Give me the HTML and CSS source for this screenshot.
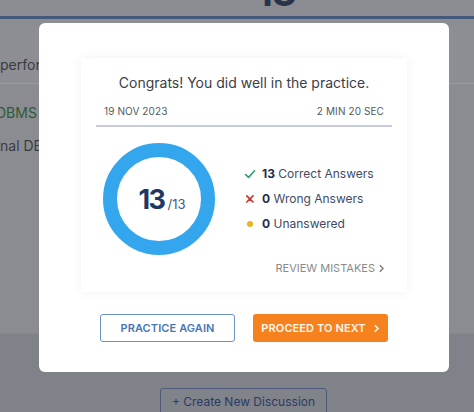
FILE: index.html
```html
<!DOCTYPE html>
<html lang="en">
<head>
<meta charset="utf-8">
<title>Practice result</title>
<link rel="stylesheet" href="styles.css">
</head>
<body>
<div class="page">
  <div class="top-num"><span>13</span></div>
  <div class="blue-line"></div>
  <div class="perf-row"><span>performance</span></div>
  <div class="topic">
    <div class="topic-green">DBMS</div>
    <div class="topic-sub">nal DBMS</div>
  </div>
  <div class="lower">
    <div class="discussion-btn">+ Create New Discussion</div>
  </div>
</div>

<div class="modal">
  <div class="card">
    <div class="card-title">Congrats! You did well in the practice.</div>
    <div class="meta">
      <span>19 NOV 2023</span>
      <span>2 MIN 20 SEC</span>
    </div>
    <div class="divider"></div>
    <div class="result">
      <div class="donut">
        <span class="score">13</span><span class="total">/13</span>
      </div>
      <div class="stats">
        <div class="stat">
          <svg class="ico" viewBox="0 0 12 12" width="12" height="12"><path d="M1.5 6.5 L4.6 9.4 L10.6 2.8" fill="none" stroke="#2e9f6b" stroke-width="1.6" stroke-linecap="round" stroke-linejoin="round"/></svg>
          <b>13</b>&nbsp;Correct Answers
        </div>
        <div class="stat">
          <svg class="ico" viewBox="0 0 12 12" width="12" height="12"><path d="M2.8 2.8 L9 9 M9 2.8 L2.8 9" fill="none" stroke="#c8372d" stroke-width="1.7" stroke-linecap="round"/></svg>
          <b>0</b>&nbsp;Wrong Answers
        </div>
        <div class="stat">
          <svg class="ico" viewBox="0 0 12 12" width="12" height="12"><circle cx="6" cy="6" r="3" fill="#e8b420"/></svg>
          <b>0</b>&nbsp;Unanswered
        </div>
      </div>
    </div>
    <div class="review">REVIEW MISTAKES
      <svg viewBox="0 0 8 10" width="7" height="9"><path d="M2 1.2 L5.8 5 L2 8.8" fill="none" stroke="#7e7e7e" stroke-width="1.6"/></svg>
    </div>
  </div>
  <div class="actions">
    <div class="btn btn-outline">PRACTICE AGAIN</div>
    <div class="btn btn-primary">PROCEED TO NEXT
      <svg viewBox="0 0 8 10" width="7" height="9"><path d="M2 1.2 L5.8 5 L2 8.8" fill="none" stroke="#ffffff" stroke-width="1.7"/></svg>
    </div>
  </div>
</div>
</body>
</html>
```

FILE: styles.css
```css
* { box-sizing: border-box; }

html, body {
  margin: 0;
  padding: 0;
}

body {
  width: 474px;
  height: 412px;
  overflow: hidden;
  position: relative;
  background: #8a8c91;
  font-family: Inter, "Noto Sans", sans-serif;
}

.page {
  display: flex;
  flex-direction: column;
  height: 412px;
}

.page > div {
  flex-shrink: 0;
}

.top-num {
  height: 16px;
  overflow: hidden;
  display: flex;
  justify-content: center;
  padding-left: 78px;
}

.top-num span {
  font-size: 38px;
  line-height: 38px;
  font-weight: 700;
  letter-spacing: -1px;
  color: #29334a;
  margin-top: -27px;
}

.blue-line {
  height: 3px;
  background: #42597b;
}

.perf-row {
  height: 65px;
  border-bottom: 1px solid #9a9ca1;
  display: flex;
  align-items: flex-end;
  padding-bottom: 10px;
  font-size: 14px;
  color: #383b42;
  background: #8c8e93;
}

.topic {
  height: 249px;
  padding-top: 20px;
  font-size: 14px;
}

.topic-green {
  color: #2f5b35;
  line-height: 18px;
  margin-left: -4px;
}

.topic-sub {
  color: #3a3c43;
  line-height: 18px;
  margin-top: 15px;
}

.page > .lower {
  flex: 1 1 auto;
  min-height: 0;
  overflow: hidden;
  background: #7f8288;
  border-top: 1px solid #85888d;
  display: flex;
  justify-content: center;
  align-items: flex-start;
  padding-top: 54px;
  padding-left: 13px;
}

.discussion-btn {
  width: 167px;
  height: 30px;
  flex-shrink: 0;
  border: 1px solid #4f5a7a;
  border-radius: 3px;
  color: #2e3a66;
  font-size: 12px;
  display: flex;
  justify-content: center;
  padding-top: 5px;
  background: #80838a;
}

/* modal */
.modal {
  position: absolute;
  left: 39px;
  top: 23px;
  width: 410px;
  height: 349px;
  background: #ffffff;
  border-radius: 6px;
  padding: 35px 42px 0;
  display: flex;
  flex-direction: column;
  gap: 22px;
}

.card {
  height: 234px;
  background: #ffffff;
  box-shadow: 0 0 10px rgba(40, 50, 120, 0.07);
  padding-top: 16px;
  display: flex;
  flex-direction: column;
}

.card-title {
  text-align: center;
  font-size: 14px;
  line-height: 18px;
  color: #3a3e48;
}

.meta {
  display: flex;
  justify-content: space-between;
  padding: 0 23px;
  margin-top: 13px;
  font-size: 10px;
  line-height: 12px;
  color: #555960;
  letter-spacing: 0.1px;
}

.divider {
  height: 2px;
  background: #c7cbe2;
  margin: 8px 15px 0;
}

.result {
  display: flex;
  margin-top: 16px;
  padding-left: 22px;
  gap: 29px;
}

.donut {
  width: 112px;
  height: 112px;
  border-radius: 50%;
  border: 14px solid #33a6ee;
  display: flex;
  align-items: baseline;
  justify-content: center;
  padding-top: 26px;
  padding-left: 6px;
}

.score {
  font-size: 27px;
  font-weight: 700;
  letter-spacing: -1.5px;
  color: #1e3766;
  line-height: 34px;
}

.total {
  font-size: 13px;
  color: #405a82;
  margin-left: 3px;
}

.stats {
  display: flex;
  flex-direction: column;
  padding-top: 18px;
}

.stat {
  height: 25px;
  display: flex;
  align-items: center;
  font-size: 12px;
  color: #3e4a66;
}

.stat b {
  font-weight: 700;
  color: #1f2c4d;
}

.ico {
  margin-right: 6px;
}

.review {
  margin-top: 6px;
  align-self: flex-end;
  margin-right: 22px;
  font-size: 11px;
  line-height: 14px;
  color: #8a8a8a;
  display: flex;
  align-items: center;
  gap: 3px;
}

.actions {
  display: flex;
  justify-content: center;
  gap: 18px;
}

.btn {
  width: 135px;
  height: 28px;
  border-radius: 3px;
  display: flex;
  align-items: center;
  justify-content: center;
  font-size: 11px;
  font-weight: 600;
  letter-spacing: 0.1px;
  gap: 7px;
}

.btn-outline {
  border: 1.5px solid #6a93c8;
  color: #4877b4;
}

.btn-primary {
  background: #f5821f;
  color: #fff6ec;
}
```
